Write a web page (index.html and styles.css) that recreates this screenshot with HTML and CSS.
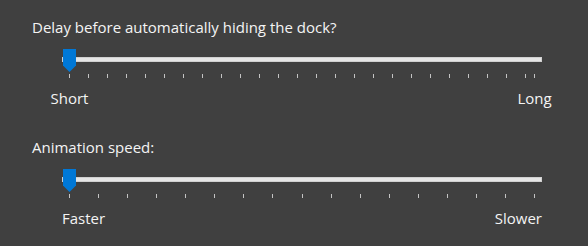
FILE: index.html
```html
<!DOCTYPE html>
<html>
<head>
<meta charset="utf-8">
<link rel="stylesheet" href="styles.css">
</head>
<body>
  <div class="block">
    <div class="title">Delay before automatically hiding the dock?</div>
    <div class="slider">
      <div class="track"></div>
      <div class="thumb"></div>
    </div>
    <div class="ticks">
      <div class="run run-19">
        <span class="tick"></span><span class="tick"></span><span class="tick"></span><span class="tick"></span><span class="tick"></span>
        <span class="tick"></span><span class="tick"></span><span class="tick"></span><span class="tick"></span><span class="tick"></span>
        <span class="tick"></span><span class="tick"></span><span class="tick"></span><span class="tick"></span><span class="tick"></span>
        <span class="tick"></span><span class="tick"></span><span class="tick"></span><span class="tick"></span><span class="tick"></span>
        <span class="tick"></span><span class="tick"></span><span class="tick"></span><span class="tick"></span><span class="tick"></span>
      </div>
      <span class="tick"></span>
    </div>
    <div class="labels">
      <div class="anchor"><span>Short</span></div>
      <div class="anchor"><span>Long</span></div>
    </div>
  </div>
  <div class="block">
    <div class="title">Animation speed:</div>
    <div class="slider">
      <div class="track"></div>
      <div class="thumb"></div>
    </div>
    <div class="ticks">
      <span class="tick"></span><span class="tick"></span><span class="tick"></span><span class="tick"></span><span class="tick"></span>
      <span class="tick"></span><span class="tick"></span><span class="tick"></span><span class="tick"></span><span class="tick"></span>
      <span class="tick"></span><span class="tick"></span><span class="tick"></span><span class="tick"></span><span class="tick"></span>
      <span class="tick"></span><span class="tick"></span>
    </div>
    <div class="labels labels-edge">
      <span>Faster</span>
      <span>Slower</span>
    </div>
  </div>
</body>
</html>
```
FILE: styles.css
```css
html, body {
  margin: 0;
  padding: 0;
  background: #404040;
}
body {
  font-family: "Open Sans", "Noto Sans", sans-serif;
  font-size: 15px;
  color: #f4f4f4;
  width: 588px;
  height: 246px;
  overflow: hidden;
}
.block {
  height: 120px;
  padding: 17px 0 0 32px;
  box-sizing: border-box;
}
.title {
  line-height: 20px;
  white-space: nowrap;
}
.slider {
  position: relative;
  margin: 12px 0 0 30px;
  padding-top: 8px;
  width: 480px;
  height: 23px;
  box-sizing: border-box;
}
.track {
  height: 5px;
  box-sizing: border-box;
  background: #e6e6e6;
  border: 1px solid #d0d0d0;
}
.thumb {
  position: absolute;
  left: 1px;
  top: 0;
  width: 13px;
  height: 23px;
  background: #0078d7;
  clip-path: polygon(0 0, 100% 0, 100% 72%, 50% 100%, 0 72%);
}
.ticks {
  display: flex;
  justify-content: space-between;
  margin: 2px 0 0 37px;
  width: 466px;
  height: 4px;
}
.run-19 {
  display: flex;
  gap: 18px;
}
.tick {
  width: 1px;
  height: 4px;
  background: #c4c4c4;
  flex: none;
}
.labels {
  display: flex;
  justify-content: space-between;
  margin: 10px 0 0 37px;
  width: 466px;
  line-height: 20px;
  white-space: nowrap;
}
.labels-edge {
  margin-left: 30px;
  width: 480px;
}
.anchor {
  width: 1px;
  display: flex;
  justify-content: center;
}
```
